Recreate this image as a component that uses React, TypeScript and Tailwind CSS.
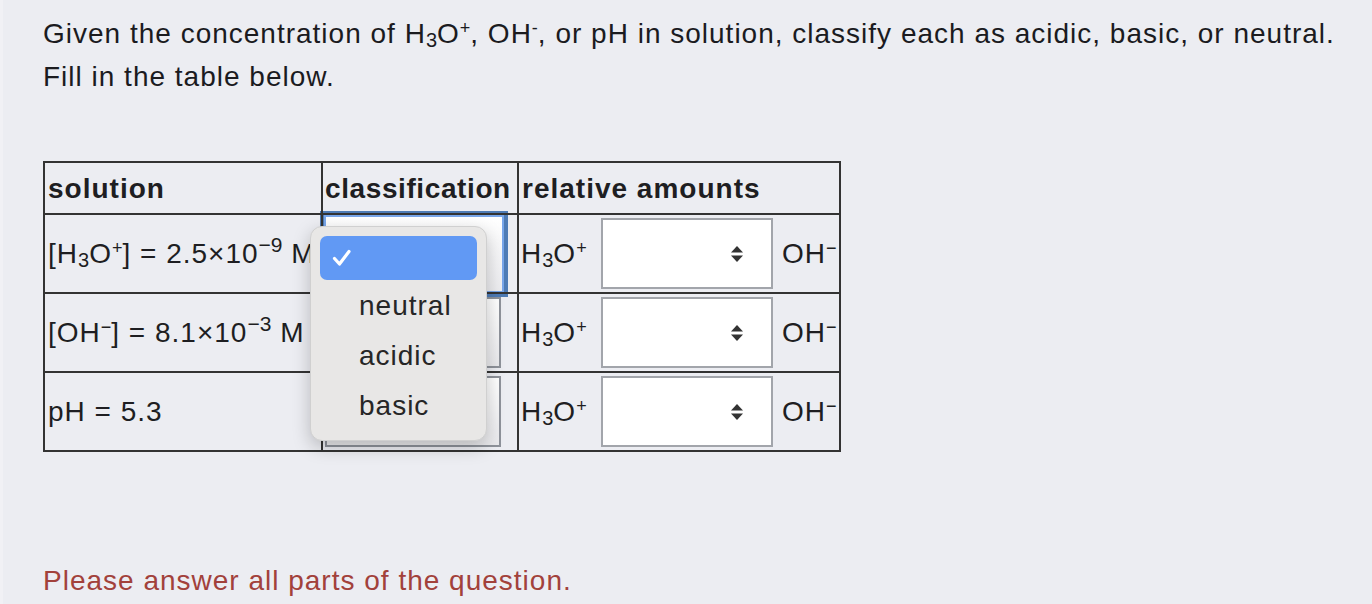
import React from 'react';

const font = { fontFamily: '"Liberation Sans", Arial, Helvetica, sans-serif' };

function Updown() {
  return (
    <svg width="14" height="18" viewBox="0 0 14 18" className="shrink-0">
      <path d="M7 1 L13 7.5 H1 Z" fill="#333" />
      <path d="M7 17 L13 10.5 H1 Z" fill="#333" />
    </svg>
  );
}

function Sup({ children }: { children: React.ReactNode }) {
  return <sup className="text-[18px] tracking-normal top-[-9px]">{children}</sup>;
}

function H3O() {
  return (
    <span>
      H<sub className="text-[20px] tracking-normal bottom-[-4px]">3</sub>O<Sup>+</Sup>
    </span>
  );
}

function AmountCell() {
  return (
    <td className="border-2 border-[#333] px-[2px] py-0">
      <div className="flex items-center">
        <span className="w-[80px] whitespace-nowrap"><H3O /></span>
        <div className="w-[172px] h-[71px] bg-white border-2 border-[#a2a5ab] flex items-center justify-end pr-[27px]">
          <Updown />
        </div>
        <span className="ml-[9px] whitespace-nowrap">OH<Sup>−</Sup></span>
      </div>
    </td>
  );
}

function ClassCell({ focused }: { focused?: boolean }) {
  return (
    <td className="border-2 border-[#333] p-0">
      {focused ? (
        <div className="ml-[-3px] my-[-5px] w-[188px] h-[86px] border-[4px] border-[#4e7bb5] p-[2px] bg-[#78a6ea]">
          <div className="w-full h-full bg-gradient-to-b from-white to-[#ececef]" />
        </div>
      ) : (
        <div className="ml-[2px] w-[176px] h-[71px] border-2 border-[#8e929a] bg-gradient-to-b from-white to-[#e9e9ec]" />
      )}
    </td>
  );
}

export default function App() {
  return (
    <div className="w-[1372px] h-[604px] bg-[#ecedf2] text-[#1b1b1f] text-[28px] tracking-[1px] relative overflow-hidden" style={font}>
      <div className="absolute left-0 top-0 bottom-0 w-[3px] bg-[#f1f1f5]" />
      <div className="pl-[43px] pt-[12px]">
        <p className="leading-[43px] whitespace-nowrap">
          Given the concentration of H<sub className="text-[20px] tracking-normal bottom-[-4px]">3</sub>O<Sup>+</Sup>, OH<Sup>-</Sup>, or pH in solution, classify each as acidic, basic, or neutral.
        </p>
        <p className="leading-[43px]">Fill in the table below.</p>

        <table className="mt-[63px] border-collapse border-2 border-[#333] text-[#1e1e22]">
          <thead>
            <tr className="h-[52px]">
              <th className="w-[278px] border-2 border-[#333] text-left font-bold px-[3px] pt-[2px]">solution</th>
              <th className="w-[196px] border-2 border-[#333] text-left font-bold px-[2px] pt-[2px] tracking-[0.6px]">classification</th>
              <th className="w-[322px] border-2 border-[#333] text-left font-bold px-[3px] pt-[2px]">relative amounts</th>
            </tr>
          </thead>
          <tbody>
            <tr className="h-[79px]">
              <td className="border-2 border-[#333] px-[3px] whitespace-nowrap">
                [<H3O />] = 2.5×10<sup className="text-[21px] tracking-normal top-[-11px]">−9</sup> M
              </td>
              <ClassCell focused />
              <AmountCell />
            </tr>
            <tr className="h-[79px]">
              <td className="border-2 border-[#333] px-[3px] whitespace-nowrap">
                [OH<Sup>−</Sup>] = 8.1×10<sup className="text-[21px] tracking-normal top-[-11px]">−3</sup> M
              </td>
              <ClassCell />
              <AmountCell />
            </tr>
            <tr className="h-[79px]">
              <td className="border-2 border-[#333] px-[3px]">pH = 5.3</td>
              <ClassCell />
              <AmountCell />
            </tr>
          </tbody>
        </table>

        <p className="mt-[108px] text-[#a2413b]">Please answer all parts of the question.</p>
      </div>

      {/* open select menu */}
      <div className="absolute left-[310px] top-[226px] w-[177px] h-[215px] rounded-[12px] bg-[#e8e7e6] border border-[#d0d0d0] shadow-[0_6px_18px_rgba(0,0,0,0.22)] px-[9px] pt-[9px] text-[#262626]">
        <div className="h-[44px] rounded-[7px] bg-[#6199f4] flex items-center pl-[12px]">
          <svg width="20" height="18" viewBox="0 0 20 18">
            <path d="M2.5 9.5 L7.5 15 L17 2.5" fill="none" stroke="white" strokeWidth="3.2" strokeLinecap="round" strokeLinejoin="round" />
          </svg>
        </div>
        <div className="pl-[39px] leading-[50px] pt-[1px]">
          <div>neutral</div>
          <div>acidic</div>
          <div>basic</div>
        </div>
      </div>
    </div>
  );
}
